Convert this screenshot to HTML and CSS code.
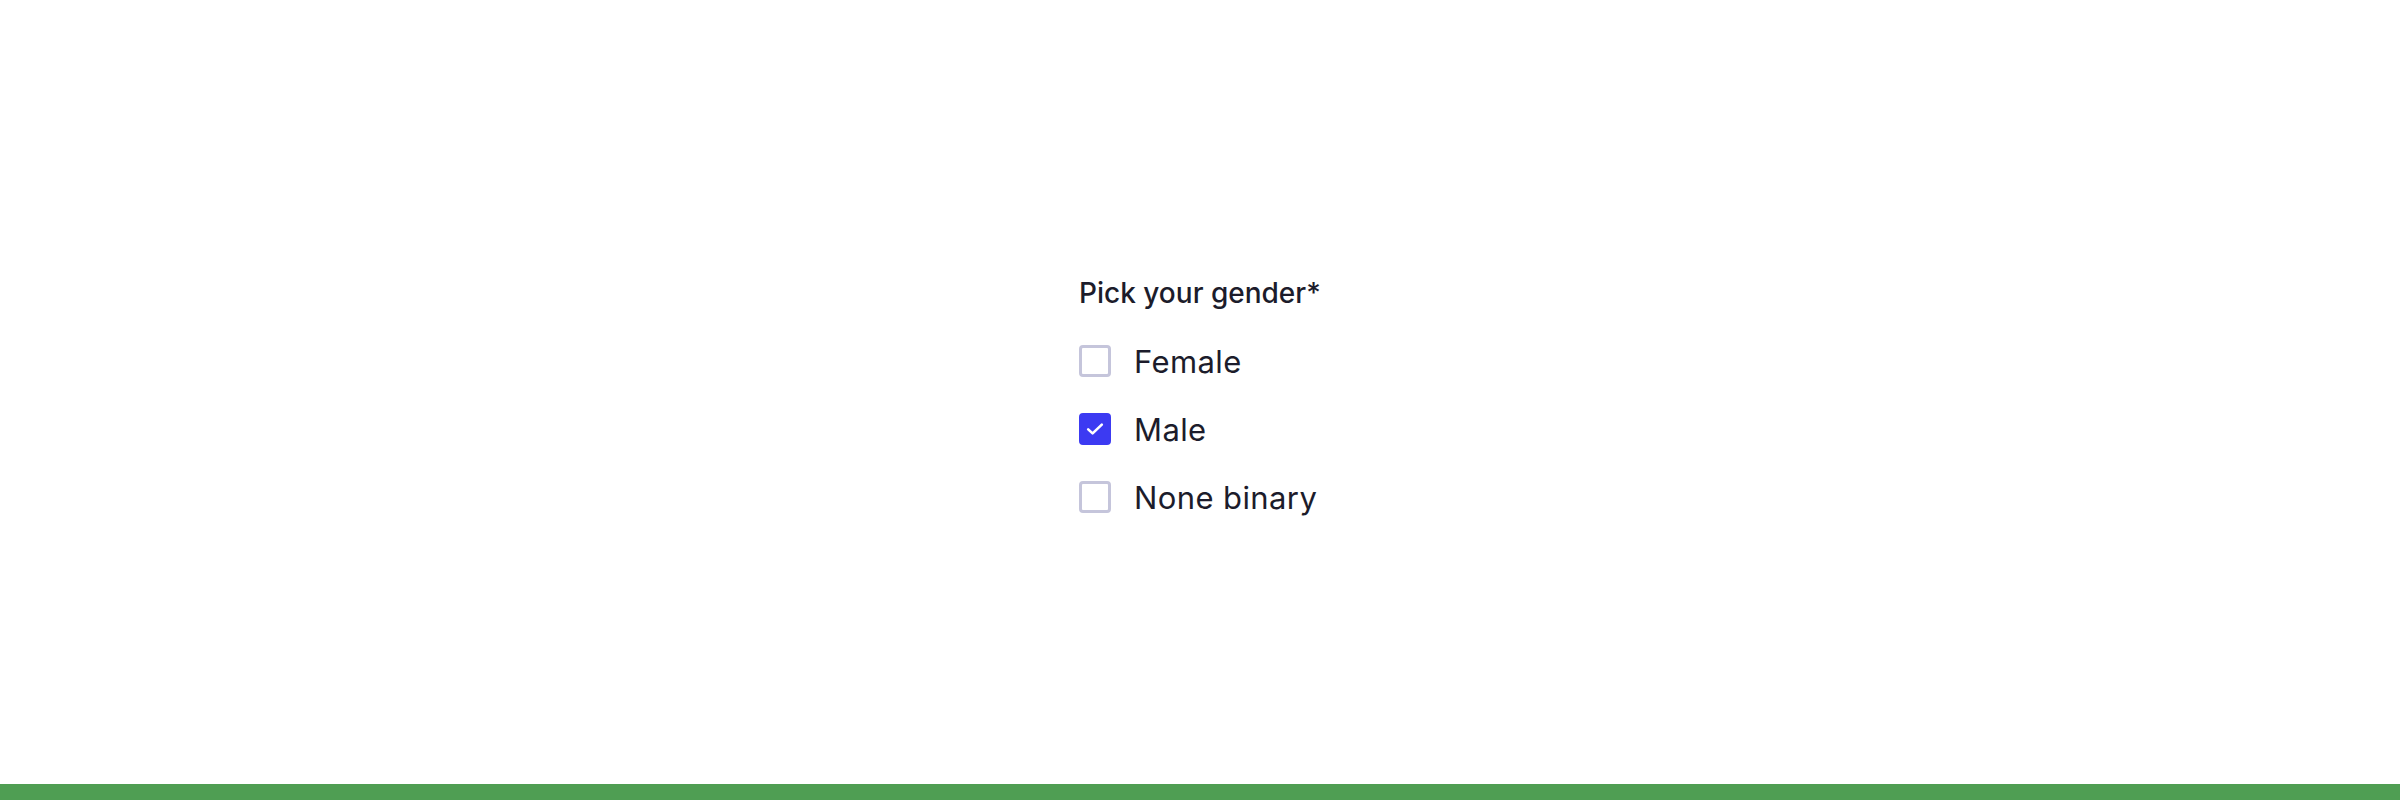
FILE: index.html
```html
<!DOCTYPE html>
<html lang="en">
<head>
<meta charset="utf-8">
<title>Pick your gender</title>
<link rel="stylesheet" href="styles.css">
</head>
<body>
<main class="stage">
  <fieldset class="group">
    <legend class="group-label">Pick your gender*</legend>
    <div class="options">
      <label class="option">
        <span class="box"></span>
        <span class="option-text">Female</span>
      </label>
      <label class="option">
        <span class="box box-checked">
          <svg class="check" viewBox="0 0 18 14" width="18" height="14" aria-hidden="true">
            <path d="M2.2 7.4 L6.6 11.4 L15.8 2.6" fill="none" stroke="#ffffff" stroke-width="2.6" stroke-linecap="round" stroke-linejoin="round"/>
          </svg>
        </span>
        <span class="option-text">Male</span>
      </label>
      <label class="option">
        <span class="box"></span>
        <span class="option-text">None binary</span>
      </label>
    </div>
  </fieldset>
</main>
<footer class="bar"></footer>
</body>
</html>
```
FILE: styles.css
```css
html, body {
  margin: 0;
  padding: 0;
  height: 100%;
  background: #ffffff;
}

body {
  display: flex;
  flex-direction: column;
  font-family: Inter, "Noto Sans", sans-serif;
  color: #1c1c2b;
}

.stage {
  flex: 1;
  display: flex;
  align-items: center;
  justify-content: center;
  padding-top: 6px;
}

.group {
  border: 0;
  margin: 0;
  padding: 0;
  display: flex;
  flex-direction: column;
  gap: 33px;
  width: 242px;
}

.group-label {
  padding: 0;
  font-size: 28px;
  font-weight: 500;
  line-height: 34px;
  white-space: nowrap;
  float: left;
}

.options {
  display: flex;
  flex-direction: column;
  gap: 32px;
}

.option {
  display: flex;
  align-items: center;
  gap: 23px;
  height: 36px;
}

.box {
  box-sizing: border-box;
  width: 32px;
  height: 32px;
  border: 3px solid #c5c5db;
  border-radius: 4px;
  display: flex;
  align-items: center;
  justify-content: center;
  flex: none;
}

.box-checked {
  background: #3c3af2;
  border-color: #3c3af2;
}

.check {
  display: block;
}

.option-text {
  font-size: 31px;
  font-weight: 400;
  line-height: 36px;
  letter-spacing: 0.4px;
  white-space: nowrap;
  position: relative;
  top: 1px;
}

.bar {
  height: 16px;
  background: #4f9e53;
  flex: none;
}
```
